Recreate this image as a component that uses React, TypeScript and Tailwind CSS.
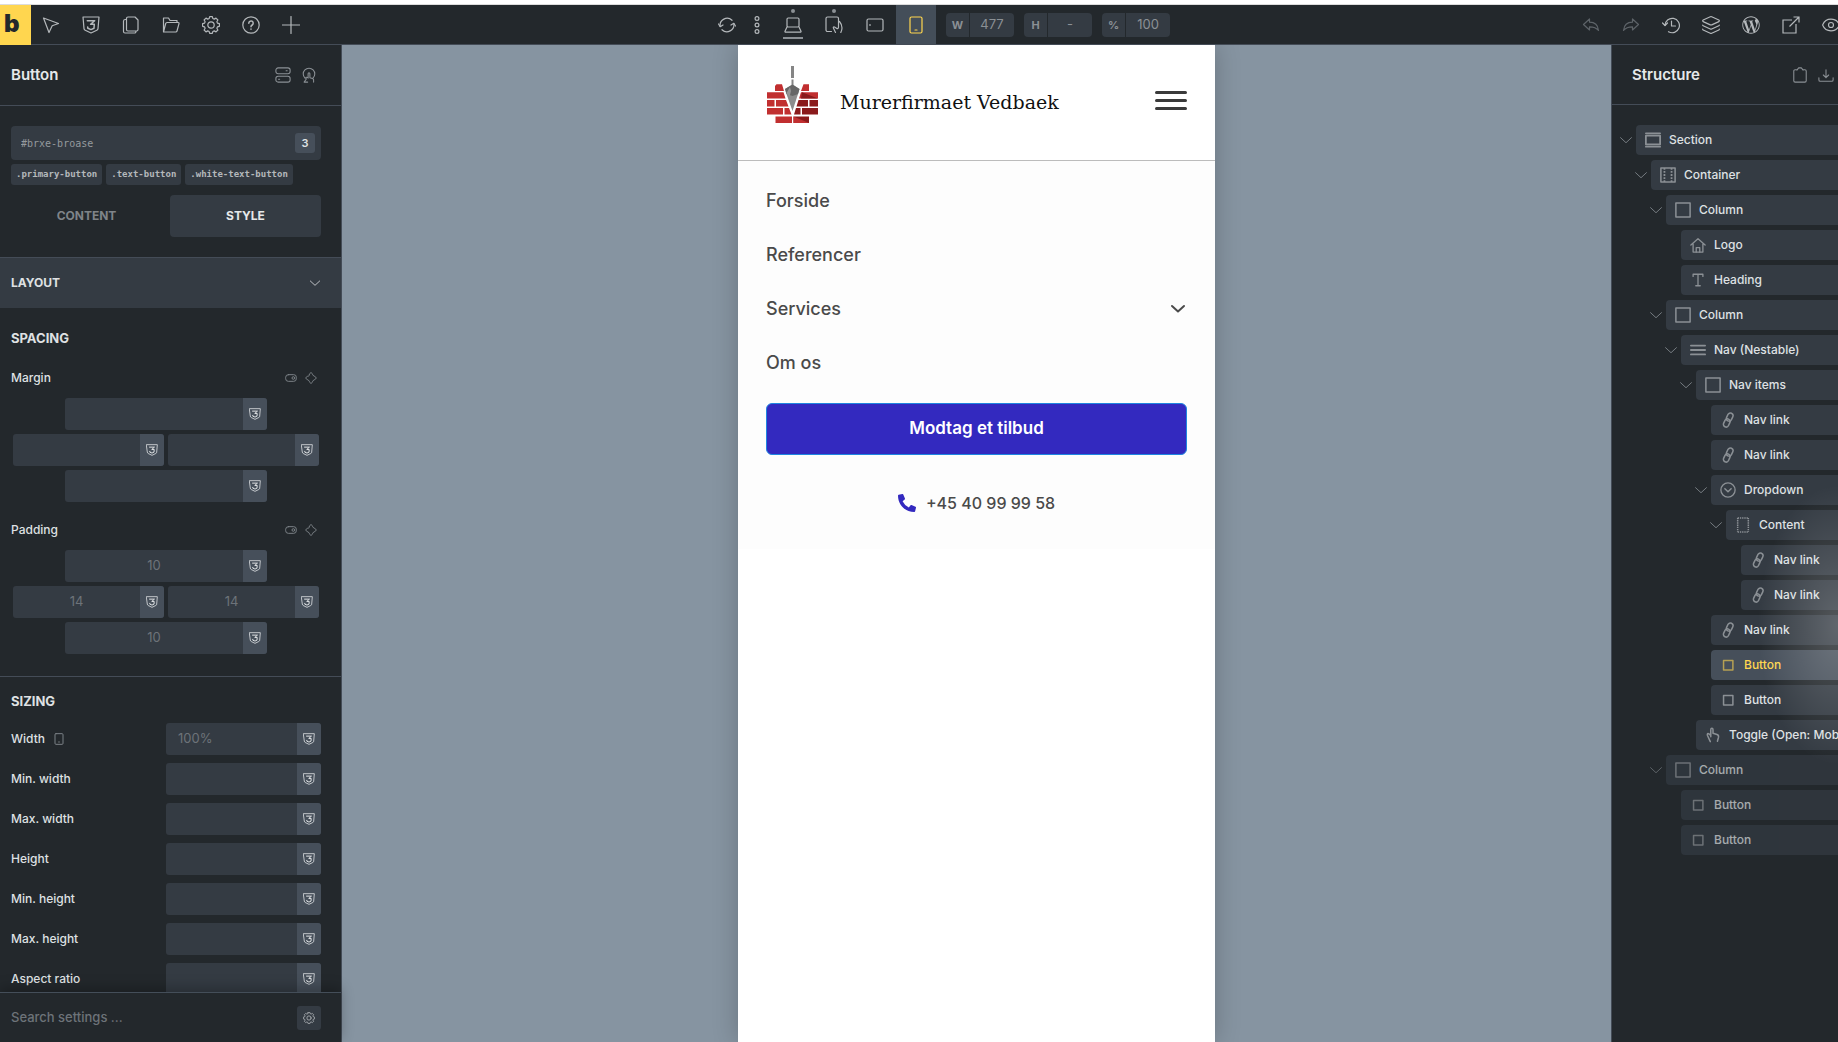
import type { ReactNode } from "react";
import { Layers, Eye } from "lucide-react";
import { FaPhoneAlt, FaWordpressSimple } from "react-icons/fa";

type IconProps = { className?: string; children?: ReactNode };

function Icon({ className = "size-[18px]", children }: IconProps) {
  return (
    <svg viewBox="0 0 18 18" className={className} fill="none" stroke="currentColor" strokeWidth="1.2" strokeLinecap="round" strokeLinejoin="round" aria-hidden="true">
      {children}
    </svg>
  );
}

function Css3Icon({ className }: IconProps) {
  return (
    <Icon className={className}>
      <path d="M1 1h16l-1 11.6a2 2 0 0 1-1.2 1.6L9 17l-5.8-2.8A2 2 0 0 1 2 12.6z" />
      <path d="M5.3 4.7h7.4L8.6 8.2h3.7l-.3 4L9 13.6l-3.2-1.3-.1-1.3" strokeWidth="1.5" />
    </Icon>
  );
}

function gearPath(teeth: number, outer: number, inner: number) {
  const points: string[] = [];
  for (let i = 0; i < teeth; i++) {
    [[-0.2, outer], [0.2, outer], [0.36, inner], [0.64, inner]].forEach(([offset, radius]) => {
      const angle = ((i + offset) / teeth) * Math.PI * 2 - Math.PI / 2;
      points.push(`${(9 + Math.cos(angle) * radius).toFixed(2)} ${(9 + Math.sin(angle) * radius).toFixed(2)}`);
    });
  }
  return `M${points.join("L")}Z`;
}

function GearIcon({ className }: IconProps) {
  return (
    <Icon className={className}>
      <path d={gearPath(8, 8.5, 6.7)} />
      <circle cx="9" cy="9" r="3.2" />
    </Icon>
  );
}

function ChevronIcon({ className }: IconProps) {
  return <Icon className={className}><path d="M2 6l7 6.500 7-6.500" /></Icon>;
}

const leftTools = [
  { label: "Select", icon: <Icon><path d="M1.5 2l15 5.5-6.300 2.300L7 16.500z" /></Icon> },
  { label: "Global classes", icon: <Css3Icon className="size-[18px]" /> },
  { label: "Pages", icon: <Icon><path d="M6 1h7l3 3v9.500a1.500 1.500 0 0 1-1.500 1.500H6A1.500 1.500 0 0 1 4.500 13.500v-11A1.500 1.500 0 0 1 6 1zM4.500 3.500H3.200A1.700 1.700 0 0 0 1.500 5v10.500A1.500 1.500 0 0 0 3 17h9.500a1.500 1.500 0 0 0 1.500-1.500v-.5" /></Icon> },
  { label: "Templates", icon: <Icon><path d="M1.500 16V2h5l1.500 2.500h7v2M1.500 16l2.200-8.500a1.400 1.400 0 0 1 1.300-1h11.200c.7 0 1 .5.8 1.200l-2 7.300a1.400 1.400 0 0 1-1.300 1z" /></Icon> },
  { label: "Settings", icon: <GearIcon className="size-[18px]" /> },
  { label: "Help", icon: <Icon><circle cx="9" cy="9" r="8.2" /><path d="M6.800 7.200A2.200 2.200 0 1 1 10.200 9C9.400 9.500 9 9.900 9 10.700M9 13v.2" strokeWidth="1.5" /></Icon> },
  { label: "Elements", icon: <Icon><path d="M9 .5v17M.5 9h17" /></Icon> },
];

const rightTools = [
  { label: "Undo", dim: true, icon: <Icon><path d="M1.500 8.500l6-5.500v3.200c5.500 0 8.500 3 9 8.300-2-2.700-4.500-3.700-9-3.700V14z" /></Icon> },
  { label: "Redo", dim: true, icon: <Icon><path d="M16.500 8.500l-6-5.500v3.200C5 6.200 2 9.200 1.500 14.500c2-2.700 4.500-3.700 9-3.700V14z" /></Icon> },
  { label: "History", icon: <Icon><path d="M3 9.500a7.200 7.200 0 1 1 3.500 6.200" /><path d="M.5 7l2.500 2.500L5.500 7M9.500 5v5h4" /></Icon> },
  { label: "Structure", icon: <Layers size={20} strokeWidth={1.4} /> },
  { label: "WordPress", icon: <FaWordpressSimple size={18} /> },
  { label: "Open page", icon: <Icon><path d="M10 4H1v13h13V8M7.500 10.500L17 1M11.500 1H17v5.500" strokeLinecap="butt" strokeLinejoin="miter" /></Icon> },
  { label: "Preview", icon: <Eye size={20} strokeWidth={1.4} /> },
];

function Toolbar() {
  return (
    <header className="flex h-10 shrink-0 border-b border-[#444c57] bg-[#23282c] text-[#b4b8bb]">
      <a href="#" aria-label="Bricks" className="-mb-px flex w-[31px] shrink-0 items-center bg-[#ffd64f] pb-0.5 pl-1 text-2xl font-black text-[#23282c]">b</a>
      <nav className="flex shrink-0 pt-px">
        {leftTools.map((tool) => (
          <button key={tool.label} type="button" aria-label={tool.label} className="flex w-10 items-center justify-center">{tool.icon}</button>
        ))}
      </nav>
      <div className="flex min-w-0 flex-1 justify-center pr-[5px]">
        <button type="button" aria-label="Reload canvas" className="flex w-10 items-center justify-center">
          <Icon><path d="M2.200 10.500A7 7 0 0 1 14 4.300M15.800 7.500A7 7 0 0 1 4 13.700" /><path d="M.5 8l1.700 2.700L5 9M17.500 10l-1.700-2.700L13 9" /></Icon>
        </button>
        <button type="button" aria-label="Breakpoints" className="mr-1.5 flex w-5 items-center justify-center">
          <Icon><circle cx="9" cy="2.5" r="1.9" /><circle cx="9" cy="9" r="1.9" /><circle cx="9" cy="15.5" r="1.9" /></Icon>
        </button>
        <div className="flex gap-px">
          <button type="button" aria-label="Desktop" className="relative flex w-10 items-center justify-center">
            <span className="absolute top-1 size-1 rounded-full bg-[#8b9095]" />
            <Icon><rect x="3" y="2" width="12" height="9" rx="1.2" /><path d="M3 11l-2 4.200a.7.7 0 0 0 .7 1h14.600a.7.7 0 0 0 .7-1L15 11" /></Icon>
            <span className="absolute bottom-[5px] h-0.5 w-5 bg-[#8b9095]" />
          </button>
          <button type="button" aria-label="Tablet" className="relative flex w-10 items-center justify-center">
            <span className="absolute top-1 size-1 rounded-full bg-[#8b9095]" />
            <Icon><path d="M6.500 15.500h-4A1.500 1.500 0 0 1 1 14V2.500A1.500 1.500 0 0 1 2.500 1H12a1.500 1.500 0 0 1 1.500 1.500v8.500c0 1.500-1 2-2 1.200l-2-1.200c-1-.5-1.500.5-1 1.300l2 4.200M14.500 5.500c1.700 2 2.500 4.500 2.500 6.500 0 1.500-.5 3-1.200 4.500" /></Icon>
          </button>
          <button type="button" aria-label="Mobile landscape" className="flex w-10 items-center justify-center">
            <Icon><rect x="1" y="3" width="16" height="12" rx="1.5" /><path d="M4 8.500v1" /></Icon>
          </button>
          <button type="button" aria-label="Mobile portrait" aria-pressed="true" className="flex w-10 items-center justify-center bg-[#444e59] text-[#ffd64f]">
            <Icon><rect x="3" y="1" width="12" height="16" rx="1.5" /><path d="M8 14h2" /></Icon>
          </button>
        </div>
        <div className="ml-2.5 flex items-center gap-2.5 pt-px text-[#8b9095]">
          <SizeField name="W" value="477" />
          <SizeField name="H" value="-" />
          <SizeField name="%" value="100" />
        </div>
      </div>
      <nav className="flex w-[267px] shrink-0 overflow-hidden pt-px">
        {rightTools.map((tool) => (
          <button key={tool.label} type="button" aria-label={tool.label} className={tool.dim ? "flex w-10 shrink-0 items-center justify-center text-[#5d6368]" : "flex w-10 shrink-0 items-center justify-center"}>{tool.icon}</button>
        ))}
      </nav>
    </header>
  );
}

function SizeField({ name, value }: { name: string; value: string }) {
  return (
    <label className="flex h-6 w-[68px] overflow-hidden rounded bg-[#343b43] text-[13px]">
      <span className="flex w-6 items-center justify-center border-r border-[#23282c] text-[11px] font-bold">{name}</span>
      <input className="w-11 min-w-0 bg-transparent text-center" defaultValue={value} />
    </label>
  );
}

function UnitField({ label, value = "", className, inputClass = "text-center" }: { label: string; value?: string; className: string; inputClass?: string }) {
  return (
    <div className={`flex h-8 overflow-hidden rounded-[3px] bg-[#343b43] ${className}`}>
      <input id={label} aria-label={label} className={`w-full min-w-0 flex-1 bg-transparent text-[13px] placeholder:text-[#6d7379] ${inputClass}`} placeholder={value} />
      <button type="button" aria-label={`${label} variable`} className="flex w-6 shrink-0 items-center justify-center bg-[#464f5a] text-[#dfe2e4]">
        <Css3Icon className="size-3" />
      </button>
    </div>
  );
}

function SpacingControl({ label, vertical, horizontal }: { label: string; vertical?: string; horizontal?: string }) {
  return (
    <div role="group" aria-label={label}>
      <div className="flex h-5 items-center gap-2 pr-1">
        <span className="flex-1 text-xs font-medium">{label}</span>
        <button type="button" aria-label={`Link opposite ${label}`} className="text-[#7b8186]">
          <Icon className="size-3"><rect x="1" y="4" width="16" height="10" rx="4" strokeWidth="1.5" /><circle cx="12.5" cy="9" r="2" strokeWidth="1.5" /></Icon>
        </button>
        <button type="button" aria-label={`Link all ${label}`} className="text-[#7b8186]">
          <Icon className="size-3"><path d="M6.500 4V3L9 .8 11.500 3v1l2 2.500h1L17.200 9l-2.700 2.500h-1l-2 2.500v1L9 17.200 6.500 15v-1l-2-2.500h-1L.8 9l2.700-2.500h1z" strokeWidth="1.5" /></Icon>
        </button>
      </div>
      <div className="mt-2.5 flex flex-wrap justify-center gap-1 px-0.5">
        <UnitField label={`${label} top`} value={vertical} className="w-[202px]" />
        <div className="flex w-full gap-1">
          <UnitField label={`${label} left`} value={horizontal} className="flex-1" />
          <UnitField label={`${label} right`} value={horizontal} className="flex-1" />
        </div>
        <UnitField label={`${label} bottom`} value={vertical} className="w-[202px]" />
      </div>
    </div>
  );
}

const classNames = [".primary-button", ".text-button", ".white-text-button"];
const sizingFields = ["Width", "Min. width", "Max. width", "Height", "Min. height", "Max. height", "Aspect ratio"];

function SettingsPanel() {
  return (
    <aside className="flex w-[342px] shrink-0 flex-col border-r border-[#444c57] bg-[#23282c] text-[#dfe1e3]">
      <div className="flex h-[61px] shrink-0 items-center gap-2.5 border-b border-[#444c57] pr-6 pl-[11px] text-[#8b9095]">
        <h2 className="flex-1 text-[15px] font-semibold text-[#e6e8ea]">Button</h2>
        <button type="button" aria-label="Show conditions">
          <Icon className="size-4"><rect x="1" y="1" width="16" height="6.5" rx="2.5" /><rect x="1" y="10.5" width="16" height="6.5" rx="2.5" /><path d="M12.500 4.300h1.200M4 13.800h1.200" /></Icon>
        </button>
        <button type="button" aria-label="Interactions">
          <Icon className="size-4"><path d="M4.500 12.500a6.500 6.500 0 1 1 9 0" /><path d="M8 12.500V7.500c0-1.500 2-1.500 2 0v4.500l3 1c1.500.5 1.500 1.500 1.200 3v1M8 12c-2.500-1-3.500 0-2 1.500L3.500 17h4" /></Icon>
        </button>
      </div>

      <div className="min-h-0 flex-1 overflow-hidden">
        <div className="pt-5 pr-5 pl-[11px]">
          <div className="flex h-[34px] items-center rounded bg-[#343b43] pr-1.5 pl-2.5">
            <input aria-label="Element ID" className="min-w-0 flex-1 bg-transparent font-['DejaVu_Sans_Mono',monospace] text-[10px] text-[#959a9e]" defaultValue="#brxe-broase" />
            <span className="flex size-5 items-center justify-center rounded-[3px] bg-[#464f5a] text-[11px] font-semibold">3</span>
          </div>
          <div className="mt-1 flex gap-1">
            {classNames.map((name) => (
              <button key={name} type="button" className="h-[21px] rounded-[3px] bg-[#343b43] px-[5px] font-['DejaVu_Sans_Mono',monospace] text-[9px] font-bold text-[#b4b8bb]">{name}</button>
            ))}
          </div>
          <div className="mt-2.5 flex gap-2 text-xs font-bold">
            <button type="button" className="h-[42px] flex-1 text-[#7f8489]">CONTENT</button>
            <button type="button" className="h-[42px] flex-1 rounded bg-[#343b43] text-[#e6e8ea]">STYLE</button>
          </div>
        </div>

        <button type="button" className="mt-5 flex h-[51px] w-full items-center justify-between border-t border-[#444c57] bg-[#343b43] pr-5 pl-[11px] text-xs font-bold">
          LAYOUT
          <ChevronIcon className="size-3" />
        </button>

        <section className="flex flex-col border-b border-[#444c57] pt-5 pr-5 pb-[22px] pl-[11px]">
          <h3 className="mb-5 text-[13px] leading-5 font-bold">SPACING</h3>
          <SpacingControl label="Margin" />
          <div className="h-[18px]" />
          <SpacingControl label="Padding" vertical="10" horizontal="14" />
        </section>

        <section className="flex flex-col gap-2 pt-3.5 pr-5 pl-[11px]">
          <h3 className="mb-1 text-[13px] leading-5 font-bold">SIZING</h3>
          {sizingFields.map((field) => (
            <div key={field} className="flex items-center justify-between">
              <label htmlFor={field} className="flex items-center gap-2 text-xs font-medium">
                {field}
                {field === "Width" ? <Icon className="size-3 text-[#7b8186]"><rect x="3" y="1" width="12" height="16" rx="1.5" strokeWidth="1.5" /><path d="M8 13.500h2" /></Icon> : null}
              </label>
              <UnitField label={field} value={field === "Width" ? "100%" : ""} className="w-1/2" inputClass="pl-3" />
            </div>
          ))}
        </section>
      </div>

      <div className="z-10 flex h-[50px] shrink-0 items-center border-t border-[#444e59] pr-5 pl-[11px] shadow-[0_-4px_12px_rgba(0,0,0,0.25)]">
        <input aria-label="Search settings" className="min-w-0 flex-1 bg-transparent text-[13px] font-medium placeholder:text-[#6d7379]" placeholder="Search settings ..." />
        <button type="button" aria-label="Panel settings" className="flex size-6 items-center justify-center rounded-[3px] bg-[#343b43] text-[#b4b8bb]">
          <GearIcon className="size-3" />
        </button>
      </div>
    </aside>
  );
}

function BrickLogo() {
  return (
    <svg viewBox="0 0 51 58" className="h-[58px] w-[51px]" aria-hidden="true">
      <g fill="#c12f30">
        <path d="M8 25v-5l1.500-1.800H15l2 6.800zM36.500 18.200H42V25h-8z" />
        <path d="M0 26.300h16.500l2 6.200H0zM0 34h7.500v6.500H0zM9 34h10l2.500 6.500H9zM0 42h16v6.500H0zM17.500 42h4.500l2.500 6.500h-7zM8.500 50.500H25V57H8.500z" />
        <path d="M34 26.300h17v6.200H32z" />
      </g>
      <g fill="#8a1a1b">
        <path d="M35 26.300l16 6.200H34zM31.500 34H41v6.500H29.500zM42.500 34H51v6.500h-8.500zM29 42h4.500v6.500H27zM35 42h16v6.500H35zM26.500 50.500H42V57H26.500z" />
      </g>
      <path d="M26.500 50.500L42 57H26.500z" fill="#c12f30" />
      <path d="M24 0h3v12h-3zM24.500 13.500h2V19h-2z" fill="#858585" />
      <path d="M25.500 18.500l7 4.500-1.500 5-5.500 17L19.500 28 18 23z" fill="#8c8c8c" />
      <path d="M25.500 18.500l7 4.500-1.500 5-5.500 2-6-2L18 23z" fill="#666" />
      <path d="M23 21l1 4-1.500 6-3-4z" fill="#959595" />
    </svg>
  );
}

const navLink = "flex h-[54px] items-center text-lg font-medium text-[#4a4a4a]";

function SitePreview() {
  return (
    <main className="flex min-w-0 flex-1 justify-center overflow-hidden bg-[#8694a1]">
      <div className="w-[477px] bg-white shadow-[0_0_24px_rgba(0,0,0,0.22)]">
        <div className="flex h-[116px] items-center border-b border-[#bcbcbc] pr-7 pb-4 pl-[29px]">
          <BrickLogo />
          <h1 className="ml-[22px] flex-1 pt-4 font-['DejaVu_Serif',serif] text-[19px] whitespace-nowrap text-[#111]">Murerfirmaet Vedbaek</h1>
          <button type="button" aria-label="Open menu" className="flex w-8 flex-col gap-[5px] pt-3">
            <span className="h-[3px] rounded-full bg-[#3a3a3a]" />
            <span className="h-[3px] rounded-full bg-[#3a3a3a]" />
            <span className="h-[3px] rounded-full bg-[#3a3a3a]" />
          </button>
        </div>
        <nav className="flex h-[388px] flex-col bg-[#fdfdfd] px-7 pt-[13px]">
          <a href="#" className={navLink}>Forside</a>
          <a href="#" className={navLink}>Referencer</a>
          <button type="button" className={`${navLink} justify-between`}>
            Services
            <Icon className="size-[18px]"><path d="M3 6l6 5.500L15 6" strokeWidth="2" /></Icon>
          </button>
          <a href="#" className={navLink}>Om os</a>
          <a href="#" className="mt-[13px] flex h-[52px] items-center justify-center rounded-md border border-[#1f86e0] bg-[#3329bf] text-[17px] font-semibold text-white">Modtag et tilbud</a>
          <a href="#" className="mt-6 flex h-12 items-center justify-center gap-2.5 text-base font-medium text-[#4a4a4a]">
            <FaPhoneAlt size={18} color="#3329bf" />
            +45 40 99 99 58
          </a>
        </nav>
      </div>
    </main>
  );
}

const treeIcons = {
  section: <><path d="M1 1.500h16M1 16.500h16" strokeWidth="2" /><rect x="1" y="4" width="16" height="10" strokeWidth="2" /></>,
  container: <><rect x="1" y="1" width="16" height="16" strokeWidth="1.7" /><path d="M5 1v16M13 1v16" strokeDasharray="2 1.5" strokeLinecap="butt" strokeWidth="2" /></>,
  column: <rect x="1" y="1" width="16" height="16" strokeWidth="1.7" />,
  content: <><path d="M3 1h12M3 17h12M3 1v16M15 1v16" strokeDasharray="1.5 1" strokeLinecap="butt" strokeWidth="1.7" /></>,
  logo: <><path d="M1 9l8-7 8 7M3.500 8v9h11V8" strokeWidth="1.5" /><path d="M7 17v-5h4v5" strokeWidth="1.5" /></>,
  heading: <path d="M3.500 5V2.500h11V5M9 2.500v13M6.500 15.500h5" strokeWidth="1.5" />,
  nav: <path d="M1 4h16M1 9h16M1 14h16" strokeWidth="2" />,
  link: <><rect x="8" y="1" width="6" height="9.5" rx="3" transform="rotate(25 11 5.5)" strokeWidth="1.7" /><rect x="4.500" y="7.5" width="6" height="9.5" rx="3" transform="rotate(25 7.5 12.5)" strokeWidth="1.7" /></>,
  dropdown: <><circle cx="9" cy="9" r="8" strokeWidth="1.5" /><path d="M5.500 7.500L9 11l3.500-3.500" strokeWidth="1.7" /></>,
  button: <rect x="4" y="4" width="10.500" height="10.500" strokeWidth="1.7" />,
  toggle: <path d="M6.500 11V3c0-2 2.500-2 2.500 0v4l4.500 1.500c1.500.5 2 1.500 1.700 3L14 16M6.500 9.500L4 7.500c-1.500-.5-1.500 1-1.200 2l2.500 5.500.7 1.500" strokeWidth="1.7" />,
};

type TreeNode = { label: string; icon: keyof typeof treeIcons; depth: number; open?: boolean; active?: boolean; hidden?: boolean };

const tree: TreeNode[] = [
  { label: "Section", icon: "section", depth: 0, open: true },
  { label: "Container", icon: "container", depth: 1, open: true },
  { label: "Column", icon: "column", depth: 2, open: true },
  { label: "Logo", icon: "logo", depth: 3 },
  { label: "Heading", icon: "heading", depth: 3 },
  { label: "Column", icon: "column", depth: 2, open: true },
  { label: "Nav (Nestable)", icon: "nav", depth: 3, open: true },
  { label: "Nav items", icon: "column", depth: 4, open: true },
  { label: "Nav link", icon: "link", depth: 5 },
  { label: "Nav link", icon: "link", depth: 5 },
  { label: "Dropdown", icon: "dropdown", depth: 5, open: true },
  { label: "Content", icon: "content", depth: 6, open: true },
  { label: "Nav link", icon: "link", depth: 7 },
  { label: "Nav link", icon: "link", depth: 7 },
  { label: "Nav link", icon: "link", depth: 5 },
  { label: "Button", icon: "button", depth: 5, active: true },
  { label: "Button", icon: "button", depth: 5 },
  { label: "Toggle (Open: Mobile)", icon: "toggle", depth: 4 },
  { label: "Column", icon: "column", depth: 2, open: true, hidden: true },
  { label: "Button", icon: "button", depth: 3, hidden: true },
  { label: "Button", icon: "button", depth: 3, hidden: true },
];

const indents = ["pl-1", "pl-[19px]", "pl-[34px]", "pl-[49px]", "pl-[64px]", "pl-[79px]", "pl-[94px]", "pl-[109px]"];

function StructurePanel() {
  return (
    <aside className="relative flex w-[227px] shrink-0 flex-col overflow-hidden border-l border-[#444c57] bg-[#23282c] text-[#dfe1e3]">
      <div className="flex h-[60px] shrink-0 items-center gap-2.5 border-b border-[#444c57] pt-px pr-1 pl-5 text-[#8b9095]">
        <h2 className="flex-1 text-[15px] font-semibold text-[#e6e8ea]">Structure</h2>
        <button type="button" aria-label="Paste"><Icon className="size-4"><path d="M5.500 3H3.500A1.500 1.500 0 0 0 2 4.500v11A1.500 1.500 0 0 0 3.500 17h11a1.500 1.500 0 0 0 1.500-1.500v-11A1.500 1.500 0 0 0 14.500 3h-2M5.500 3.500L7.500 1h3l2 2.500" /></Icon></button>
        <button type="button" aria-label="Save"><Icon className="size-4"><path d="M9 3v9M6 9l3 3 3-3M1 12v2.500A1.500 1.500 0 0 0 2.500 16h13a1.500 1.500 0 0 0 1.500-1.500V12" /></Icon></button>
      </div>
      <ul className="flex flex-col gap-[5px] pt-5">
        {tree.map((node, index) => (
          <li key={index} className={`flex ${indents[node.depth]} ${node.hidden ? "opacity-70" : ""}`}>
            <span className="flex w-5 shrink-0 items-center justify-center text-[#7b8186]">
              {node.open ? <ChevronIcon className="size-3.5" /> : null}
            </span>
            <button type="button" className={`flex h-[30px] min-w-0 flex-1 items-center gap-2 overflow-hidden rounded-l pl-[9px] text-xs font-medium whitespace-nowrap ${node.active ? "bg-[#464f5a] text-[#ffd64f]" : "bg-[#343b43]"}`}>
              <span className={node.active ? "shrink-0 opacity-60" : "shrink-0 text-[#8b9095]"}>
                <Icon className="size-4">{treeIcons[node.icon]}</Icon>
              </span>
              {node.label}
            </button>
          </li>
        ))}
      </ul>
      <div className="pointer-events-none absolute top-[440px] -right-[80px] h-[280px] w-[160px] bg-[radial-gradient(closest-side,rgba(255,255,255,0.22),transparent)]" />
    </aside>
  );
}

export default function App() {
  return (
    <div className="flex h-screen flex-col overflow-hidden font-[Inter,sans-serif]">
      <div className="h-[5px] shrink-0 border-b border-[#dcdcdc] bg-white" />
      <Toolbar />
      <div className="flex min-h-0 flex-1">
        <SettingsPanel />
        <SitePreview />
        <StructurePanel />
      </div>
    </div>
  );
}
